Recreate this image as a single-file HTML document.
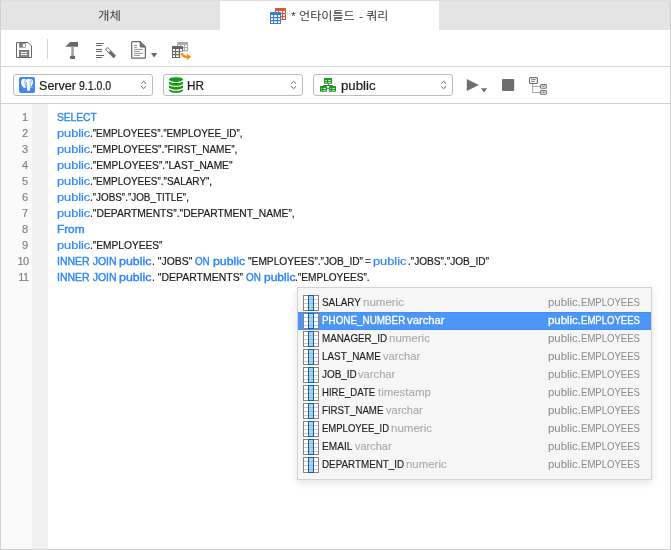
<!DOCTYPE html>
<html lang="ko">
<head>
<meta charset="utf-8">
<title>Query</title>
<style>
*{box-sizing:border-box;margin:0;padding:0}
html,body{width:671px;height:550px;overflow:hidden;background:#fff}
body{position:relative;font-family:"Liberation Sans","Noto Sans CJK KR",sans-serif;color:#222}
.abs{position:absolute}
#root{position:absolute;left:0;top:0;width:671px;height:550px;will-change:transform}
svg{display:block;overflow:visible}
#frame{left:0;top:0;width:671px;height:550px;border:1px solid #d0d0d0;border-top-color:#dedede;z-index:50}
#tabbar{left:0;top:0;width:671px;height:30px;background:#e4e4e4}
#tab1{left:0;top:0;width:220px;height:30px}
#tab2{left:220px;top:0;width:219px;height:30px;background:#fff}
.tt{top:1.3px;line-height:30px;font-size:11.4px;color:#3a3a3a;white-space:nowrap}
#tb1{left:0;top:30px;width:671px;height:36px;background:#fff}
#ln1{left:0;top:66px;width:671px;height:1px;background:#d4d4d4}
#ln2{left:0;top:103px;width:671px;height:1px;background:#cfcfcf}
#sep{left:47px;top:39px;width:1px;height:20px;background:#d2d2d2}
.dd{top:74px;height:22px;width:140px;border:1px solid #bcbcbc;border-radius:3px;background:#fff}
.ddt{top:76px;font-size:12px;line-height:20px;white-space:nowrap;color:#1c1c1c;-webkit-text-stroke:0.2px #1c1c1c}
#gut{left:0;top:104px;width:32px;height:446px;background:#fafafa}
#fold{left:32px;top:104px;width:16px;height:446px;background:#f0f0f0}
.num{left:0;width:28px;text-align:right;font-size:11px;line-height:16px;color:#808080;-webkit-text-stroke:0.15px #808080}
.f{position:absolute;white-space:pre;transform-origin:0 50%}
.code{font-size:11px;line-height:16px;color:#1a1a1a;-webkit-text-stroke:0.2px #1a1a1a}
.k{color:#2b86fa;-webkit-text-stroke:0.2px #2b86fa}
.eq{color:#8a8a8a}
.kb{color:#2b86fa;-webkit-text-stroke:0.38px #2b86fa}
#pop{left:297px;top:287px;width:355px;height:193px;background:#f6f6f6;border:1px solid #d3d3d3;box-shadow:0 3px 8px rgba(0,0,0,.11)}
#sel{left:298px;top:312px;width:353px;height:18px;background:#4c96f8;box-shadow:inset 0 1px #448ef3,inset 0 -1px #448ef3}
.pn{font-size:10.5px;line-height:18px;color:#1c1c1c;-webkit-text-stroke:0.15px #1c1c1c}
.pn i{font-style:normal;color:#a8a8a8;-webkit-text-stroke:0.1px #a8a8a8}
.pr{font-size:10.5px;line-height:18px;color:#8a8a8a}
.w,.w i{color:#fff}
.wb,.wb i{-webkit-text-stroke:0.3px #fff}
</style>
</head>
<body>
<svg width="0" height="0" style="position:absolute"><defs>
<g id="colic">
<rect x="0.5" y="0.5" width="15" height="15" fill="#fff" stroke="#858585"/>
<path d="M1 4.5H15M1 8.5H15M1 12.5H15" stroke="#c9c9c9" fill="none"/>
<rect x="5.5" y="0.5" width="5" height="15" fill="#a6d5f7" stroke="#1f5d8c"/>
<path d="M6 4.5H10M6 8.5H10M6 12.5H10" stroke="#7fbdea" fill="none"/>
</g></defs></svg>
<div id="root">
<div id="tabbar" class="abs"></div>
<div id="tab1" class="abs"></div>
<div id="tab2" class="abs"></div>
<span class="f tt" id="t1" style="transform:scaleX(1.0969);left:97.5px">개체</span>
<span class="f tt" id="t2" style="transform:scaleX(1.0600);left:291px">* 언타이틀드</span> <span class="f tt" id="t3" style="transform:scaleX(1.0529);left:359.2px">- 쿼리</span>
<svg class="abs" style="left:270px;top:8px" width="17" height="16" viewBox="0 0 17 16">
<rect x="5" y="0" width="11" height="12" rx="0.6" fill="#d8583a"/>
<path d="M6.0 3.1H8.0V4.9H6.0ZM6.0 6.2H8.0V8.0H6.0ZM6.0 9.2H8.0V11.0H6.0ZM9.1 3.1H11.9V4.9H9.1ZM9.1 6.2H11.9V8.0H9.1ZM9.1 9.2H11.9V11.0H9.1ZM13.0 3.1H15.0V4.9H13.0ZM13.0 6.2H15.0V8.0H13.0ZM13.0 9.2H15.0V11.0H13.0Z" fill="#fff"/>
<rect x="0" y="4" width="11" height="12" rx="0.6" fill="#3a82c8"/>
<path d="M1.0 7.1H3.0V8.9H1.0ZM1.0 10.2H3.0V12.0H1.0ZM1.0 13.2H3.0V15.0H1.0ZM4.1 7.1H6.9V8.9H4.1ZM4.1 10.2H6.9V12.0H4.1ZM4.1 13.2H6.9V15.0H4.1ZM8.0 7.1H10.0V8.9H8.0ZM8.0 10.2H10.0V12.0H8.0ZM8.0 13.2H10.0V15.0H8.0Z" fill="#fff"/>
</svg>
<div id="tb1" class="abs"></div>
<div id="ln1" class="abs"></div>
<div id="ln2" class="abs"></div>
<svg class="abs" style="left:16px;top:42px" width="16" height="16" viewBox="0 0 16 16">
<path d="M0.5 0.5H12L15.5 4V15.5H0.5Z" fill="#fff" stroke="#666"/>
<rect x="3.2" y="0.6" width="6.4" height="5" fill="#757575"/>
<rect x="6.8" y="1.8" width="2.2" height="3.2" fill="#fff"/>
<rect x="3.4" y="8.4" width="9.4" height="7.2" fill="#858585" stroke="#666" stroke-width="0.8"/>
<path d="M5 10.5H11M5 12.5H11" stroke="#fff" stroke-width="1"/>
</svg>
<div id="sep" class="abs"></div>
<svg class="abs" style="left:65px;top:42px" width="14" height="17" viewBox="0 0 14 17">
<path d="M5.2 0H13V4.8H0.3Z" fill="#666"/>
<rect x="6.3" y="4.8" width="2.5" height="9.4" fill="#a2a2a2"/>
<rect x="5" y="13.8" width="5.1" height="3.2" rx="1.2" fill="#666"/>
</svg>
<svg class="abs" style="left:96px;top:42px" width="21" height="17" viewBox="0 0 21 17">
<path d="M0 1.5H8M0 3.5H6M0 7.5H6M0 9.5H6M0 13.5H8M0 15.5H6" stroke="#686868" stroke-width="1" fill="none"/>
<g transform="translate(14.55,10.55) rotate(46)">
<rect x="-6.1" y="-1.75" width="12.2" height="3.5" fill="#6e6e6e"/>
<rect x="-5.3" y="-0.95" width="4" height="1.9" fill="#fff"/>
</g>
</svg>
<svg class="abs" style="left:131px;top:41px" width="27" height="18" viewBox="0 0 27 18">
<path d="M1.5 0.7H9.2L14.4 5.9V16.4a0.8 0.8 0 0 1 -0.8 0.8H1.5a0.8 0.8 0 0 1 -0.8 -0.8V1.5a0.8 0.8 0 0 1 0.8 -0.8Z" fill="#fff" stroke="#666" stroke-width="1.2"/>
<path d="M9 0.9L14.3 6.2H9.8a0.8 0.8 0 0 1 -0.8 -0.8Z" fill="#707070" stroke="#666" stroke-width="0.6"/>
<path d="M3 4.4H6M3 6.4H6M3 8.4H12M3 10.4H9M3 12.4H12M3 14.4H9" stroke="#8a8a8a" stroke-width="0.9" fill="none"/>
<path d="M20 12H26.2L23.1 16.5Z" fill="#666"/>
</svg>
<svg class="abs" style="left:172px;top:42px" width="20" height="18" viewBox="0 0 20 18">
<rect x="5" y="0" width="11" height="10.4" rx="0.6" fill="#acacac"/>
<path d="M6.0 3.1H8.0V4.9H6.0ZM6.0 6.2H8.0V8.0H6.0ZM6.0 9.2H8.0V11.0H6.0ZM9.1 3.1H11.9V4.9H9.1ZM9.1 6.2H11.9V8.0H9.1ZM9.1 9.2H11.9V11.0H9.1ZM13.0 3.1H15.0V4.9H13.0ZM13.0 6.2H15.0V8.0H13.0ZM13.0 9.2H15.0V11.0H13.0Z" fill="#fff"/>
<rect x="4" y="9.6" width="13" height="3" fill="#fff"/>
<path d="M12.2 8.4V10M15.6 8.4V10" stroke="#c4c4c4" stroke-width="0.9"/>
<path d="M0.6 4H10.4a0.6 0.6 0 0 1 0.6 0.6V9.4H8.2V16H0.6a0.6 0.6 0 0 1 -0.6 -0.6V4.6a0.6 0.6 0 0 1 0.6 -0.6Z" fill="#666"/>
<path d="M1.0 7.1H3.0V8.9H1.0ZM1.0 10.2H3.0V12.0H1.0ZM1.0 13.2H3.0V15.0H1.0ZM4.1 7.1H6.9V8.9H4.1ZM4.1 10.2H6.9V12.0H4.1ZM4.1 13.2H6.9V15.0H4.1ZM8.0 7.1H10.0V8.9H8.0Z" fill="#fff"/>
<path d="M9.9 11.2C10.2 13.6 12 15.2 15.6 14.9" fill="none" stroke="#ff8d0a" stroke-width="2.3"/>
<path d="M14.9 11.8L19.2 14.8L14.9 17.9Z" fill="#ff8d0a"/>
</svg>
<div class="dd abs" style="left:13px"></div>
<svg class="abs" style="left:140px;top:80px" width="8" height="10" viewBox="0 0 8 10"><path d="M1.2 3.7L3.6 1.3L6 3.7M1.2 6.3L3.6 8.7L6 6.3" fill="none" stroke="#585858" stroke-width="0.95"/></svg>
<div class="dd abs" style="left:163px"></div>
<svg class="abs" style="left:290px;top:80px" width="8" height="10" viewBox="0 0 8 10"><path d="M1.2 3.7L3.6 1.3L6 3.7M1.2 6.3L3.6 8.7L6 6.3" fill="none" stroke="#585858" stroke-width="0.95"/></svg>
<div class="dd abs" style="left:313px"></div>
<svg class="abs" style="left:440px;top:80px" width="8" height="10" viewBox="0 0 8 10"><path d="M1.2 3.7L3.6 1.3L6 3.7M1.2 6.3L3.6 8.7L6 6.3" fill="none" stroke="#585858" stroke-width="0.95"/></svg>
<span class="f ddt" id="d1" style="transform:scaleX(1.0469);left:39.4px">Server</span> <span class="f ddt" id="d1b" style="transform:scaleX(0.8773);left:79.4px">9.1.0.0</span>
<span class="f ddt" id="d2" style="transform:scaleX(0.9802);left:186.8px">HR</span>
<span class="f ddt" id="d3" style="transform:scaleX(1.1033);left:341px">public</span>
<svg class="abs" style="left:19px;top:77px" width="16" height="16" viewBox="0 0 16 16">
<rect width="16" height="16" rx="2" fill="#3f87f5"/>
<path d="M6.3 2.3C4.6 1.2 2.2 2.2 2.1 4.9C2.1 7.6 3.5 10 4.9 10.8C5.9 11.3 6.8 10.6 6.9 9.4L7.6 9.2C7.8 10.4 7.9 12 8.3 13.1C8.8 14.3 10.2 14.4 10.7 13.4C11.2 12.4 11.3 10.9 11.5 9.6C12.6 9.3 13.6 7.8 14 6C14.4 4 13.6 2.2 12.2 2.2C11 1.5 8.6 1.5 7.2 2.6Z" fill="#fff"/>
<path d="M6.6 2.6C5.6 4.4 6 7.6 6.8 9.6M7.4 5.2C7.8 6.4 7.8 8 7.6 9.2M11.4 9.6C11 8.2 11.2 7 11.8 6.2C12.4 5.2 12.4 3.6 11.8 2.6" stroke="#3f87f5" stroke-width="0.7" fill="none"/>
<path d="M12.2 10.1H13.5" stroke="#fff" stroke-width="0.8"/>
<circle cx="10.6" cy="4.8" r="0.5" fill="#3f87f5"/>
</svg>
<svg class="abs" style="left:169px;top:77px" width="14" height="16" viewBox="0 0 14 16">
<path d="M0 2.6C0 -0.6 14 -0.6 14 2.6V13.2C14 16.6 0 16.6 0 13.2Z" fill="#17981a"/>
<path d="M0 3.4C1.6 6.2 12.4 6.2 14 3.4M0 7.3C1.6 10.1 12.4 10.1 14 7.3M0 11.1C1.6 13.9 12.4 13.9 14 11.1" fill="none" stroke="#fff" stroke-width="1.15"/>
</svg>
<svg class="abs" style="left:320px;top:78px" width="16" height="14" viewBox="0 0 16 14">
<path d="M8.4 5.6V7.5M3.2 7.5H12.8M6.8 10.3H9.2" stroke="#5e4e5e" stroke-width="0.9" fill="none"/>
<rect x="4" y="0" width="8" height="5.8" rx="0.5" fill="#12981a"/>
<rect x="0" y="8" width="6.9" height="5.8" rx="0.5" fill="#12981a"/>
<rect x="9.1" y="8" width="6.9" height="5.8" rx="0.5" fill="#12981a"/>
<path d="M5.2 2.4H6.8M8.2 2.4H10.9M5.2 4.4H6.8M8.2 4.4H10.9M1.2 10.4H2M3.2 10.4H5.8M1.2 12.4H2M3.2 12.4H5.8M10.2 10.4H11M12.2 10.4H14.8M10.2 12.4H11M12.2 12.4H14.8" stroke="#fff" stroke-width="0.85" fill="none"/>
</svg>
<svg class="abs" style="left:466px;top:77px" width="82" height="18" viewBox="0 0 82 18">
<path d="M0.8 2V14L12.8 8Z" fill="#6e6e6e"/>
<path d="M15 11.2H21.2L18.1 15.6Z" fill="#6e6e6e"/>
<rect x="36" y="2" width="12.2" height="12" rx="1" fill="#6e6e6e"/>
<path d="M66.6 6.8V15.5H74.4M66.6 9.5H74.4" stroke="#9a9a9a" stroke-width="0.9" fill="none"/>
<rect x="63.5" y="0.6" width="7.9" height="5.9" rx="1" fill="#fff" stroke="#6e6e6e" stroke-width="1.1"/>
<path d="M65.2 2.6H69.8M65.2 4.5H69" stroke="#6e6e6e" stroke-width="0.85"/>
<rect x="74.6" y="7.6" width="5.8" height="3.6" rx="1" fill="#fff" stroke="#6e6e6e" stroke-width="1.1"/>
<rect x="74.6" y="13.6" width="5.8" height="3.7" rx="1" fill="#fff" stroke="#6e6e6e" stroke-width="1.1"/>
<path d="M76.2 9.4H78.9M76.2 15.45H78.9" stroke="#6e6e6e" stroke-width="0.85"/>
</svg>
<div id="gut" class="abs"></div>
<div id="fold" class="abs"></div>
<div class="num abs" style="top:109px">1</div>
<div class="num abs" style="top:125px">2</div>
<div class="num abs" style="top:141px">3</div>
<div class="num abs" style="top:157px">4</div>
<div class="num abs" style="top:173px">5</div>
<div class="num abs" style="top:189px">6</div>
<div class="num abs" style="top:205px">7</div>
<div class="num abs" style="top:221px">8</div>
<div class="num abs" style="top:237px">9</div>
<div class="num abs" style="top:253px;letter-spacing:-0.6px;left:0.6px">10</div>
<div class="num abs" style="top:269px;letter-spacing:-0.6px;left:0.6px">11</div>
<span class="f code" id="c1" style="transform:scaleX(0.9276);left:56.7px;top:109px"><span class="kb">SELECT</span></span>
<span class="f code" id="c2a" style="transform:scaleX(1.1548);left:56.7px;top:125px"><span class="k">public</span></span><span class="f code" id="c2b" style="transform:scaleX(0.9006);left:89.9px;top:125px">.”EMPLOYEES”.”EMPLOYEE_ID”,</span>
<span class="f code" id="c3a" style="transform:scaleX(1.1548);left:56.7px;top:141px"><span class="k">public</span></span><span class="f code" id="c3b" style="transform:scaleX(0.9129);left:89.9px;top:141px">.”EMPLOYEES”.”FIRST_NAME”,</span>
<span class="f code" id="c4a" style="transform:scaleX(1.1548);left:56.7px;top:157px"><span class="k">public</span></span><span class="f code" id="c4b" style="transform:scaleX(0.9236);left:89.9px;top:157px">.”EMPLOYEES”.”LAST_NAME"</span>
<span class="f code" id="c5a" style="transform:scaleX(1.1548);left:56.7px;top:173px"><span class="k">public</span></span><span class="f code" id="c5b" style="transform:scaleX(0.9052);left:89.9px;top:173px">.”EMPLOYEES”.”SALARY”,</span>
<span class="f code" id="c6a" style="transform:scaleX(1.1548);left:56.7px;top:189px"><span class="k">public</span></span><span class="f code" id="c6b" style="transform:scaleX(0.8990);left:89.9px;top:189px">.”JOBS”.”JOB_TITLE”,</span>
<span class="f code" id="c7a" style="transform:scaleX(1.1548);left:56.7px;top:205px"><span class="k">public</span></span><span class="f code" id="c7b" style="transform:scaleX(0.9344);left:89.9px;top:205px">."DEPARTMENTS”."DEPARTMENT_NAME”,</span>
<span class="f code" id="c8" style="transform:scaleX(1.0712);left:56.7px;top:221px"><span class="kb">From</span></span>
<span class="f code" id="c9a" style="transform:scaleX(1.1548);left:56.7px;top:237px"><span class="k">public</span></span><span class="f code" id="c9b" style="transform:scaleX(0.9265);left:89.9px;top:237px">.”EMPLOYEES”</span>
<span class="f code" id="c10a" style="transform:scaleX(0.9560);left:56.7px;top:253px"><span class="kb">INNER JOIN</span></span> <span class="f code" id="c10a2" style="transform:scaleX(1.1270);left:119.1px;top:253px"><span class="kb">public</span></span><span class="f code" id="c10b" style="transform:scaleX(0.9471);left:151.8px;top:253px">. "JOBS"</span> <span class="f code" id="c10c" style="transform:scaleX(0.8909);left:195px;top:253px"><span class="kb">ON</span></span> <span class="f code" id="c10c2" style="transform:scaleX(1.1200);left:213.2px;top:253px"><span class="kb">public</span></span> <span class="f code" id="c10d" style="transform:scaleX(0.9250);left:248.4px;top:253px">"EMPLOYEES”.”JOB_ID”</span> <span class="f code" id="c10e" style="transform:scaleX(0.9320);left:364.8px;top:253px"><span class="eq">=</span></span> <span class="f code" id="c10e2" style="transform:scaleX(1.1617);left:372.6px;top:253px"><span class="k">public</span></span> <span class="f code" id="c10f" style="transform:scaleX(0.9201);left:408.2px;top:253px">.”JOBS”.”JOB_ID"</span>
<span class="f code" id="c11a" style="transform:scaleX(0.9560);left:56.7px;top:269px"><span class="kb">INNER JOIN</span></span> <span class="f code" id="c11a2" style="transform:scaleX(1.1270);left:119.1px;top:269px"><span class="kb">public</span></span><span class="f code" id="c11b" style="transform:scaleX(0.9510);left:151.8px;top:269px">. "DEPARTMENTS”</span> <span class="f code" id="c11c" style="transform:scaleX(0.8970);left:246px;top:269px"><span class="kb">ON</span></span> <span class="f code" id="c11c2" style="transform:scaleX(1.0922);left:264.2px;top:269px"><span class="kb">public</span></span><span class="f code" id="c11d" style="transform:scaleX(0.9148);left:295.4px;top:269px">."EMPLOYEES”.</span>
<div id="pop" class="abs"></div>
<div id="sel" class="abs"></div>
<svg class="abs" style="left:303px;top:295px" width="16" height="16" viewBox="0 0 16 16"><use href="#colic"/></svg>
<span class="f pn" id="p0" style="transform:scaleX(0.9406);left:321.5px;top:293px">SALARY</span> <span class="f pn" id="y0" style="transform:scaleX(1.0974);left:362.6px;top:293px"><i>numeric</i></span>
<span class="f pr" id="q0" style="transform:scaleX(1.0870);left:548px;top:293px">public.</span><span class="f pr" id="r0" style="transform:scaleX(0.9108);left:581.2px;top:293px">EMPLOYEES</span>
<svg class="abs" style="left:303px;top:313px" width="16" height="16" viewBox="0 0 16 16"><use href="#colic"/></svg>
<span class="f pn w wb" id="p1" style="transform:scaleX(0.9393);left:321.5px;top:311px">PHONE_NUMBER</span> <span class="f pn w wb" id="y1" style="transform:scaleX(1.0738);left:406.8px;top:311px"><i>varchar</i></span>
<span class="f pr w wb" id="q1" style="transform:scaleX(1.0870);left:548px;top:311px">public.</span><span class="f pr w wb" id="r1" style="transform:scaleX(0.9108);left:581.2px;top:311px">EMPLOYEES</span>
<svg class="abs" style="left:303px;top:331px" width="16" height="16" viewBox="0 0 16 16"><use href="#colic"/></svg>
<span class="f pn" id="p2" style="transform:scaleX(0.9361);left:321.5px;top:329px">MANAGER_ID</span> <span class="f pn" id="y2" style="transform:scaleX(1.0948);left:388.6px;top:329px"><i>numeric</i></span>
<span class="f pr" id="q2" style="transform:scaleX(1.0870);left:548px;top:329px">public.</span><span class="f pr" id="r2" style="transform:scaleX(0.9108);left:581.2px;top:329px">EMPLOYEES</span>
<svg class="abs" style="left:303px;top:349px" width="16" height="16" viewBox="0 0 16 16"><use href="#colic"/></svg>
<span class="f pn" id="p3" style="transform:scaleX(0.9417);left:321.5px;top:347px">LAST_NAME</span> <span class="f pn" id="y3" style="transform:scaleX(1.0624);left:382.6px;top:347px"><i>varchar</i></span>
<span class="f pr" id="q3" style="transform:scaleX(1.0870);left:548px;top:347px">public.</span><span class="f pr" id="r3" style="transform:scaleX(0.9108);left:581.2px;top:347px">EMPLOYEES</span>
<svg class="abs" style="left:303px;top:367px" width="16" height="16" viewBox="0 0 16 16"><use href="#colic"/></svg>
<span class="f pn" id="p4" style="transform:scaleX(0.9465);left:321.5px;top:365px">JOB_ID</span> <span class="f pn" id="y4" style="transform:scaleX(1.0652);left:358.20000000000005px;top:365px"><i>varchar</i></span>
<span class="f pr" id="q4" style="transform:scaleX(1.0870);left:548px;top:365px">public.</span><span class="f pr" id="r4" style="transform:scaleX(0.9108);left:581.2px;top:365px">EMPLOYEES</span>
<svg class="abs" style="left:303px;top:385px" width="16" height="16" viewBox="0 0 16 16"><use href="#colic"/></svg>
<span class="f pn" id="p5" style="transform:scaleX(0.9148);left:321.5px;top:383px">HIRE_DATE</span> <span class="f pn" id="y5" style="transform:scaleX(1.0901);left:378.0px;top:383px"><i>timestamp</i></span>
<span class="f pr" id="q5" style="transform:scaleX(1.0870);left:548px;top:383px">public.</span><span class="f pr" id="r5" style="transform:scaleX(0.9108);left:581.2px;top:383px">EMPLOYEES</span>
<svg class="abs" style="left:303px;top:403px" width="16" height="16" viewBox="0 0 16 16"><use href="#colic"/></svg>
<span class="f pn" id="p6" style="transform:scaleX(0.9231);left:321.5px;top:401px">FIRST_NAME</span> <span class="f pn" id="y6" style="transform:scaleX(1.0510);left:385.8px;top:401px"><i>varchar</i></span>
<span class="f pr" id="q6" style="transform:scaleX(1.0870);left:548px;top:401px">public.</span><span class="f pr" id="r6" style="transform:scaleX(0.9108);left:581.2px;top:401px">EMPLOYEES</span>
<svg class="abs" style="left:303px;top:421px" width="16" height="16" viewBox="0 0 16 16"><use href="#colic"/></svg>
<span class="f pn" id="p7" style="transform:scaleX(0.9052);left:321.5px;top:419px">EMPLOYEE_ID</span> <span class="f pn" id="y7" style="transform:scaleX(1.0974);left:391.0px;top:419px"><i>numeric</i></span>
<span class="f pr" id="q7" style="transform:scaleX(1.0870);left:548px;top:419px">public.</span><span class="f pr" id="r7" style="transform:scaleX(0.9108);left:581.2px;top:419px">EMPLOYEES</span>
<svg class="abs" style="left:303px;top:439px" width="16" height="16" viewBox="0 0 16 16"><use href="#colic"/></svg>
<span class="f pn" id="p8" style="transform:scaleX(0.9614);left:321.5px;top:437px">EMAIL</span> <span class="f pn" id="y8" style="transform:scaleX(1.0452);left:354.6px;top:437px"><i>varchar</i></span>
<span class="f pr" id="q8" style="transform:scaleX(1.0870);left:548px;top:437px">public.</span><span class="f pr" id="r8" style="transform:scaleX(0.9108);left:581.2px;top:437px">EMPLOYEES</span>
<svg class="abs" style="left:303px;top:457px" width="16" height="16" viewBox="0 0 16 16"><use href="#colic"/></svg>
<span class="f pn" id="p9" style="transform:scaleX(0.9359);left:321.5px;top:455px">DEPARTMENT_ID</span> <span class="f pn" id="y9" style="transform:scaleX(1.0894);left:406.1px;top:455px"><i>numeric</i></span>
<span class="f pr" id="q9" style="transform:scaleX(1.0870);left:548px;top:455px">public.</span><span class="f pr" id="r9" style="transform:scaleX(0.9108);left:581.2px;top:455px">EMPLOYEES</span>
<div id="frame" class="abs"></div>
</div>
</body>
</html>
